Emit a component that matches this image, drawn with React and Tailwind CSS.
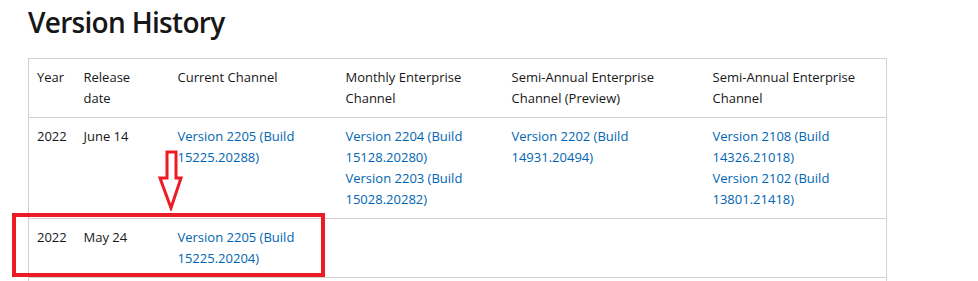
import React from "react";

const link = "text-[#0065b3]";

function Cell({ children, className = "" }) {
  return <td className={`px-2 py-2 align-top ${className}`}>{children}</td>;
}

export default function App() {
  const font = { fontFamily: '"Open Sans", "Noto Sans", sans-serif' };
  return (
    <div className="relative min-h-[281px] bg-white text-[#171717]" style={font}>
      <h1 className="pl-[28px] pt-[4px] text-[28px] leading-[36px] font-semibold tracking-[-0.7px]">
        Version History
      </h1>
      <div className="pl-[28px] pt-[18px]">
        <table className="table-fixed border-collapse border border-[#d1d1d1] text-[13px] leading-[21px]">
          <colgroup>
            <col className="w-[47px]" />
            <col className="w-[94px]" />
            <col className="w-[168px]" />
            <col className="w-[166px]" />
            <col className="w-[201px]" />
            <col className="w-[182px]" />
          </colgroup>
          <thead>
            <tr className="border-b border-[#d1d1d1] text-left">
              <Cell>Year</Cell>
              <Cell>Release<br />date</Cell>
              <Cell>Current Channel</Cell>
              <Cell>Monthly Enterprise<br />Channel</Cell>
              <Cell>Semi-Annual Enterprise<br />Channel (Preview)</Cell>
              <Cell>Semi-Annual Enterprise<br />Channel</Cell>
            </tr>
          </thead>
          <tbody>
            <tr className="border-b border-[#d1d1d1]">
              <Cell>2022</Cell>
              <Cell>June 14</Cell>
              <Cell><span className={link}>Version 2205 (Build<br />15225.20288)</span></Cell>
              <Cell>
                <div className={link}>Version 2204 (Build<br />15128.20280)</div>
                <div className={link}>Version 2203 (Build<br />15028.20282)</div>
              </Cell>
              <Cell><span className={link}>Version 2202 (Build<br />14931.20494)</span></Cell>
              <Cell>
                <div className={link}>Version 2108 (Build<br />14326.21018)</div>
                <div className={link}>Version 2102 (Build<br />13801.21418)</div>
              </Cell>
            </tr>
            <tr className="border-b border-[#d1d1d1]">
              <Cell>2022</Cell>
              <Cell>May 24</Cell>
              <Cell><span className={link}>Version 2205 (Build<br />15225.20204)</span></Cell>
              <Cell></Cell>
              <Cell></Cell>
              <Cell></Cell>
            </tr>
            <tr className="h-[40px]">
              <Cell></Cell>
              <Cell></Cell>
              <Cell></Cell>
              <Cell></Cell>
              <Cell></Cell>
              <Cell></Cell>
            </tr>
          </tbody>
        </table>
      </div>
      <div className="pointer-events-none absolute left-[12px] top-[213px] h-[64px] w-[313px] border-4 border-[#ed1c24]" />
      <svg className="pointer-events-none absolute left-[158px] top-[150px]" width="26" height="61" viewBox="0 0 26 61">
        <path d="M9 2 H18 V28 H23 L13 58 L2 28 H9 Z" fill="none" stroke="#ed1c24" strokeWidth="3" strokeLinejoin="miter" />
      </svg>
    </div>
  );
}
